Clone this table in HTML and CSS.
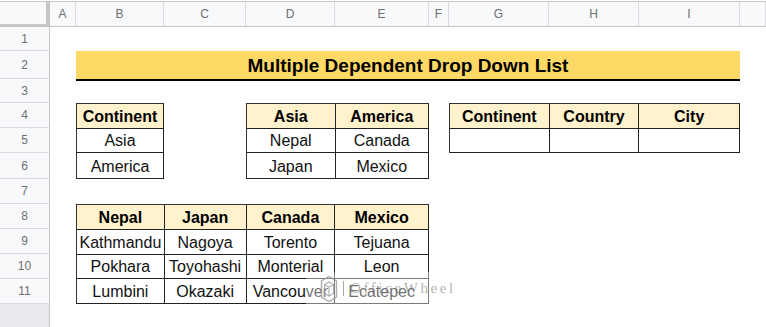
FILE: index.html
```html
<!DOCTYPE html>
<html>
<head>
<meta charset="utf-8">
<link rel="stylesheet" href="styles.css">
</head>
<body>
<div class="sheet">
  <div class="colbar">
    <div class="corner"></div>
    <div class="ch">A</div>
    <div class="ch">B</div>
    <div class="ch">C</div>
    <div class="ch">D</div>
    <div class="ch">E</div>
    <div class="ch">F</div>
    <div class="ch">G</div>
    <div class="ch">H</div>
    <div class="ch">I</div>
    <div class="ch"></div>
  </div>
  <div class="rowbar">
    <div class="rh">1</div>
    <div class="rh">2</div>
    <div class="rh">3</div>
    <div class="rh">4</div>
    <div class="rh">5</div>
    <div class="rh">6</div>
    <div class="rh">7</div>
    <div class="rh">8</div>
    <div class="rh">9</div>
    <div class="rh">10</div>
    <div class="rh">11</div>
    <div class="rh rest"></div>
  </div>

  <div class="title">Multiple Dependent Drop Down List</div>

  <div class="tbl t1">
    <div class="c hd">Continent</div>
    <div class="c">Asia</div>
    <div class="c">America</div>
  </div>

  <div class="tbl t2">
    <div class="c hd">Asia</div>
    <div class="c hd">America</div>
    <div class="c">Nepal</div>
    <div class="c">Canada</div>
    <div class="c">Japan</div>
    <div class="c">Mexico</div>
  </div>

  <div class="tbl t3">
    <div class="c hd">Continent</div>
    <div class="c hd">Country</div>
    <div class="c hd">City</div>
    <div class="c"></div>
    <div class="c"></div>
    <div class="c"></div>
  </div>

  <div class="tbl t4">
    <div class="c hd">Nepal</div>
    <div class="c hd">Japan</div>
    <div class="c hd">Canada</div>
    <div class="c hd">Mexico</div>
    <div class="c">Kathmandu</div>
    <div class="c">Nagoya</div>
    <div class="c">Torento</div>
    <div class="c">Tejuana</div>
    <div class="c">Pokhara</div>
    <div class="c">Toyohashi</div>
    <div class="c">Monterial</div>
    <div class="c">Leon</div>
    <div class="c">Lumbini</div>
    <div class="c">Okazaki</div>
    <div class="c">Vancouver</div>
    <div class="c">Ecatepec</div>
  </div>

  <div class="watermark">
    <svg class="wm-logo" width="18" height="28" viewBox="0 0 18 28">
      <path d="M9 1.5 L16.5 6 L16.5 22 L9 26.5 L1.5 22 L1.5 6 Z" fill="none" stroke="#9a9a9a" stroke-width="1.4"/>
      <path d="M9 7 L13.5 9.6 L13.5 18.4 L9 21 L4.5 18.4 L4.5 9.6 Z" fill="none" stroke="#9a9a9a" stroke-width="1.2"/>
      <path d="M4.5 9.6 L9 12.2 L13.5 9.6 M9 12.2 L9 21" fill="none" stroke="#9a9a9a" stroke-width="1.1"/>
    </svg>
    <span class="wm-bar"></span>
    <span class="wm-text">OfficeWheel</span>
  </div>
</div>
</body>
</html>
```

FILE: styles.css
```css
:root {
  --cols: 50px 26px 88px 82px 89px 94px 20px 100px 90px 101px 1fr;
  --rows: 24px 28px 24px 25px 25px 26px 25px 25px 25px 25px 25px 1fr;
}

* { box-sizing: border-box; }

html, body {
  margin: 0;
  padding: 0;
  background: #ffffff;
}

body {
  width: 766px;
  height: 327px;
  overflow: hidden;
  font-family: "Liberation Sans", Arial, sans-serif;
}

.sheet {
  position: relative;
  width: 766px;
  height: 327px;
  padding-top: 1px;
  display: grid;
  grid-template-columns: [rh] 50px [A] 26px [B] 88px [C] 82px [D] 89px [E] 94px [F] 20px [G] 100px [H] 90px [I] 101px [J] 1fr [last];
  grid-template-rows: [hd] 26px [r1] 24px [r2] 28px [r3] 24px [r4] 25px [r5] 25px [r6] 26px [r7] 25px [r8] 25px [r9] 25px [r10] 25px [r11] 25px [end] 1fr;
}

/* column header bar */
.colbar {
  grid-row: hd;
  grid-column: 1 / -1;
  display: grid;
  grid-template-columns: var(--cols);
  background: #f8f9fa;
  border-top: 1px solid #c9c9c9;
  border-bottom: 1px solid #c4c7c5;
}

.corner {
  background: #f8f9fa;
  border-right: 4px solid #c4c7c5;
  border-bottom: 3px solid #c4c7c5;
  margin-bottom: -1px;
}

.ch {
  display: flex;
  align-items: center;
  justify-content: center;
  font-size: 12px;
  color: #6f6f6f;
  border-right: 1px solid #dadce0;
}

/* row header bar */
.rowbar {
  grid-column: rh;
  grid-row: r1 / -1;
  display: grid;
  grid-template-rows: var(--rows);
  background: #f8f9fa;
  border-right: 1px solid #c4c7c5;
}

.rh {
  display: flex;
  align-items: center;
  justify-content: center;
  font-size: 12px;
  color: #6f6f6f;
  border-bottom: 1px solid #dadce0;
}

.rh.rest {
  background: #e8eaed;
  border-bottom: none;
}

/* title */
.title {
  grid-row: r2;
  grid-column: B / J;
  align-self: start;
  height: 30px;
  background: #ffd966;
  border-bottom: 2px solid #000000;
  display: flex;
  align-items: center;
  justify-content: center;
  font-weight: bold;
  font-size: 19px;
  color: #000;
  padding-top: 1px;
}

/* tables */
.tbl {
  display: grid;
  border-top: 1px solid #333;
  border-left: 1px solid #333;
}

.t1 {
  grid-column: B / C;
  grid-row: r4 / r7;
  grid-template-columns: 1fr;
  grid-template-rows: 25fr 25fr 26fr;
}

.t2 {
  grid-column: D / F;
  grid-row: r4 / r7;
  grid-template-columns: 89fr 94fr;
  grid-template-rows: 25fr 25fr 26fr;
}

.t3 {
  grid-column: G / J;
  grid-row: r4 / r6;
  grid-template-columns: 100fr 90fr 101fr;
  grid-template-rows: 1fr 1fr;
}

.t4 {
  grid-column: B / F;
  grid-row: r8 / end;
  grid-template-columns: 88fr 82fr 89fr 94fr;
  grid-template-rows: repeat(4, 1fr);
}

.c {
  display: flex;
  align-items: center;
  justify-content: center;
  border-right: 1px solid #222;
  border-bottom: 1px solid #222;
  font-size: 16px;
  color: #111;
  white-space: nowrap;
  background: #ffffff;
  padding-top: 2px;
}

.c.hd {
  background: #fff2cc;
  font-weight: bold;
  color: #000;
}

/* watermark overlay */
.watermark {
  position: absolute;
  left: 306px;
  top: 272px;
  width: 156px;
  height: 33px;
  background: rgba(255, 255, 255, 0.4);
  display: flex;
  align-items: center;
  gap: 3px;
  padding-left: 14px;
}

.wm-logo {
  flex: none;
  opacity: 0.8;
}

.wm-bar {
  width: 1px;
  height: 15px;
  background: #a8a8a8;
  margin: 0 3px 0 2px;
}

.wm-text {
  font-family: "Liberation Serif", "DejaVu Serif", serif;
  font-size: 15px;
  letter-spacing: 2.6px;
  color: rgba(110, 110, 110, 0.55);
}
```
